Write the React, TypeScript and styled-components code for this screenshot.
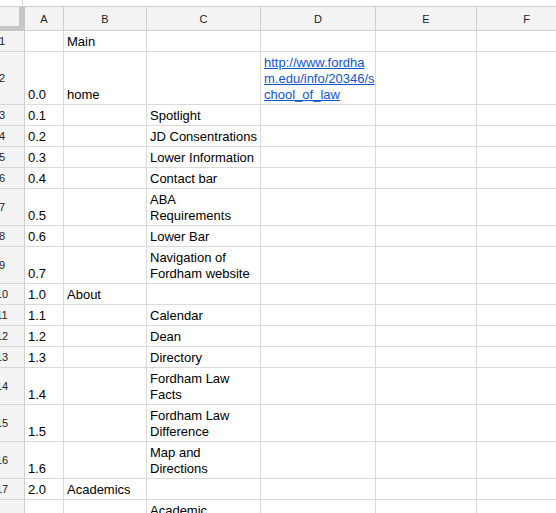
import { Fragment } from 'react';
import styled, { createGlobalStyle } from 'styled-components';

const GlobalStyle = createGlobalStyle`
  html, body {
    margin: 0;
    padding: 0;
    background: #fff;
    overflow: hidden;
  }
  body {
    font-family: 'Liberation Sans', Arial, sans-serif;
  }
`;

const columns = ['A', 'B', 'C', 'D', 'E', 'F'];

type Row = {
  n: number;
  height: number;
  a?: string;
  b?: string;
  c?: string;
  link?: string;
};

const rows: Row[] = [
  { n: 1, height: 21, b: 'Main' },
  {
    n: 2,
    height: 53,
    a: '0.0',
    b: 'home',
    link: 'http://www.fordha\nm.edu/info/20346/s\nchool_of_law',
  },
  { n: 3, height: 21, a: '0.1', c: 'Spotlight' },
  { n: 4, height: 21, a: '0.2', c: 'JD Consentrations' },
  { n: 5, height: 21, a: '0.3', c: 'Lower Information' },
  { n: 6, height: 21, a: '0.4', c: 'Contact bar' },
  { n: 7, height: 37, a: '0.5', c: 'ABA\nRequirements' },
  { n: 8, height: 21, a: '0.6', c: 'Lower Bar' },
  { n: 9, height: 37, a: '0.7', c: 'Navigation of\nFordham website' },
  { n: 10, height: 21, a: '1.0', b: 'About' },
  { n: 11, height: 21, a: '1.1', c: 'Calendar' },
  { n: 12, height: 21, a: '1.2', c: 'Dean' },
  { n: 13, height: 21, a: '1.3', c: 'Directory' },
  { n: 14, height: 37, a: '1.4', c: 'Fordham Law\nFacts' },
  { n: 15, height: 37, a: '1.5', c: 'Fordham Law\nDifference' },
  { n: 16, height: 37, a: '1.6', c: 'Map and\nDirections' },
  { n: 17, height: 21, a: '2.0', b: 'Academics' },
  { n: 18, height: 37, a: '2.1', c: 'Academic\nCalendar' },
];

const Viewport = styled.div`
  width: 556px;
  height: 513px;
  overflow: hidden;
  display: flex;
  flex-direction: column;
`;

const FormulaStrip = styled.div`
  height: 6px;
  flex: none;
  display: flex;
`;

const StripCell = styled.div`
  width: 22px;
  border-right: 1px solid #d4d4d4;
`;

// sheet is scrolled a little to the right, so the row numbers are cut
const Sheet = styled.div`
  margin-left: -20px;
  display: grid;
  grid-template-columns: 45px 39px 83px 114px 115px 101px 100px;
  border-top: 1px solid #cfcfcf;
`;

const Corner = styled.div`
  height: 19px;
  background: #f3f3f3;
  border-right: 6px solid #c6c6c6;
  border-bottom: 5px solid #c6c6c6;
`;

const ColHeader = styled.div`
  height: 24px;
  box-sizing: border-box;
  padding-top: 1px;
  background: #f3f3f3;
  border-right: 1px solid #cfcfcf;
  border-bottom: 1px solid #cfcfcf;
  display: flex;
  align-items: center;
  justify-content: center;
  font-size: 11px;
  color: #222;
`;

const RowHeader = styled.div<{ $h: number }>`
  height: ${(p) => p.$h}px;
  box-sizing: border-box;
  background: #f3f3f3;
  border-right: 1px solid #cfcfcf;
  border-bottom: 1px solid #d6d6d6;
  display: flex;
  align-items: center;
  justify-content: center;
  font-size: 11px;
  color: #222;
`;

const Cell = styled.div<{ $h: number }>`
  height: ${(p) => p.$h}px;
  box-sizing: border-box;
  border-right: 1px solid #dadada;
  border-bottom: 1px solid #dadada;
  padding: 0 2px 1px 3px;
  display: flex;
  align-items: flex-end;
  font-size: 13px;
  line-height: 16px;
  color: #000;
  white-space: pre;
  overflow: hidden;
`;

const Link = styled.a`
  color: #1155cc;
  text-decoration: underline;
  white-space: pre;
`;

export default function App() {
  return (
    <>
      <GlobalStyle />
      <Viewport>
        <FormulaStrip>
          <StripCell />
        </FormulaStrip>
        <Sheet>
          <Corner />
          {columns.map((c) => (
            <ColHeader key={c}>{c}</ColHeader>
          ))}
          {rows.map((r) => (
            <Fragment key={r.n}>
              <RowHeader $h={r.height}>{r.n}</RowHeader>
              <Cell $h={r.height}>{r.a}</Cell>
              <Cell $h={r.height}>{r.b}</Cell>
              <Cell $h={r.height}>{r.c}</Cell>
              <Cell $h={r.height}>
                {r.link && <Link href="#">{r.link}</Link>}
              </Cell>
              <Cell $h={r.height} />
              <Cell $h={r.height} />
            </Fragment>
          ))}
        </Sheet>
      </Viewport>
    </>
  );
}
